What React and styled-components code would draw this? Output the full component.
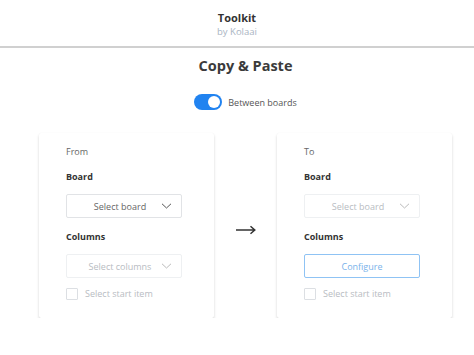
import React, { useState } from "react";
import styled, { createGlobalStyle } from "styled-components";

const GlobalStyle = createGlobalStyle`
  body {
    margin: 0;
    background: #fff;
    font-family: "Open Sans", "Noto Sans", sans-serif;
    color: #323338;
  }
`;

const Header = styled.header`
  height: 44px;
  border-bottom: 2px solid #d0d0d0;
  display: flex;
  flex-direction: column;
  align-items: center;
  justify-content: center;
  padding-top: 2px;
`;

const AppName = styled.div`
  font-size: 11px;
  font-weight: 700;
  line-height: 14px;
  color: #333;
`;

const Byline = styled.div`
  font-size: 9.5px;
  line-height: 13px;
  color: #a9b4c2;
`;

const Main = styled.main`
  display: flex;
  flex-direction: column;
  align-items: center;
  padding-left: 17px;
`;

const Title = styled.h1`
  margin: 8px 0 0;
  font-size: 14.5px;
  line-height: 20px;
  font-weight: 700;
  color: #3b3b3b;
`;

const ToggleRow = styled.label`
  margin-top: 18px;
  display: flex;
  align-items: center;
  gap: 6px;
  font-size: 9px;
  color: #555;
  cursor: pointer;
`;

const Track = styled.span`
  width: 28px;
  height: 16px;
  border-radius: 8px;
  background: ${({ $on }) => ($on ? "#2183f0" : "#c5c7d0")};
  display: flex;
  align-items: center;
  justify-content: ${({ $on }) => ($on ? "flex-end" : "flex-start")};
  padding: 0 2px;
  box-sizing: border-box;
`;

const Knob = styled.span`
  width: 12px;
  height: 12px;
  border-radius: 50%;
  background: #fff;
`;

const Panels = styled.div`
  margin-top: 23px;
  display: flex;
  align-items: center;
  gap: 21px;
`;

const Card = styled.section`
  width: 175px;
  height: 185px;
  box-sizing: border-box;
  padding: 12px 32px 0 27px;
  background: #fff;
  box-shadow: 0 2px 3px rgba(0, 0, 0, 0.16), 0 0 1px rgba(0, 0, 0, 0.07);
  border-radius: 2px;
  display: flex;
  flex-direction: column;
`;

const CardLabel = styled.div`
  font-size: 9px;
  line-height: 13px;
  color: #666;
`;

const FieldLabel = styled.div`
  margin-top: 12px;
  font-size: 9px;
  line-height: 13px;
  font-weight: 700;
  color: #333;
`;

const Select = styled.div`
  margin-top: 11px;
  height: 22px;
  border: 1px solid ${({ $disabled }) => ($disabled ? "#eef0f2" : "#e1e3e6")};
  border-radius: 2px;
  display: flex;
  align-items: center;
  padding: 0 9px 0 12px;
  font-size: 9px;
  color: ${({ $disabled }) => ($disabled ? "#b8bcc2" : "#666")};
`;

const SelectText = styled.span`
  flex: 1;
  text-align: center;
`;

const ConfigureButton = styled.button`
  margin-top: 11px;
  height: 24px;
  border: 1px solid #8fc3f4;
  border-radius: 2px;
  background: #fff;
  font-family: inherit;
  font-size: 9px;
  color: #79b2ea;
`;

const CheckRow = styled.div`
  margin-top: 9px;
  display: flex;
  align-items: center;
  gap: 7px;
  font-size: 9px;
  color: #b8bcc2;
`;

const Box = styled.span`
  width: 10px;
  height: 10px;
  border: 1px solid #dcdfe3;
  border-radius: 1px;
`;

const ArrowSlot = styled.div`
  width: 21px;
  display: flex;
  justify-content: center;
  margin-top: 8px;
`;

const Chevron = ({ color }) => (
  <svg width="11" height="6" viewBox="0 0 11 6" fill="none">
    <path d="M1 0.8L5.5 5L10 0.8" stroke={color} strokeWidth="1" />
  </svg>
);

const Arrow = () => (
  <svg width="20" height="10" viewBox="0 0 20 10" fill="none">
    <path d="M0 5H18.5M14.5 1.2L18.8 5L14.5 8.8" stroke="#333" strokeWidth="1.5" />
  </svg>
);

const Panel = ({ label, active, columns }) => (
  <Card>
    <CardLabel>{label}</CardLabel>
    <FieldLabel>Board</FieldLabel>
    <Select $disabled={!active}>
      <SelectText>Select board</SelectText>
      <Chevron color={active ? "#555" : "#bbb"} />
    </Select>
    <FieldLabel>Columns</FieldLabel>
    {columns}
    <CheckRow>
      <Box />
      Select start item
    </CheckRow>
  </Card>
);

export default function App() {
  const [on, setOn] = useState(true);
  return (
    <>
      <GlobalStyle />
      <Header>
        <AppName>Toolkit</AppName>
        <Byline>by Kolaai</Byline>
      </Header>
      <Main>
        <Title>Copy &amp; Paste</Title>
        <ToggleRow onClick={() => setOn(!on)}>
          <Track $on={on}>
            <Knob />
          </Track>
          Between boards
        </ToggleRow>
        <Panels>
          <Panel
            label="From"
            active
            columns={
              <Select $disabled>
                <SelectText>Select columns</SelectText>
                <Chevron color="#bbb" />
              </Select>
            }
          />
          <ArrowSlot>
            <Arrow />
          </ArrowSlot>
          <Panel
            label="To"
            columns={<ConfigureButton>Configure</ConfigureButton>}
          />
        </Panels>
      </Main>
    </>
  );
}
